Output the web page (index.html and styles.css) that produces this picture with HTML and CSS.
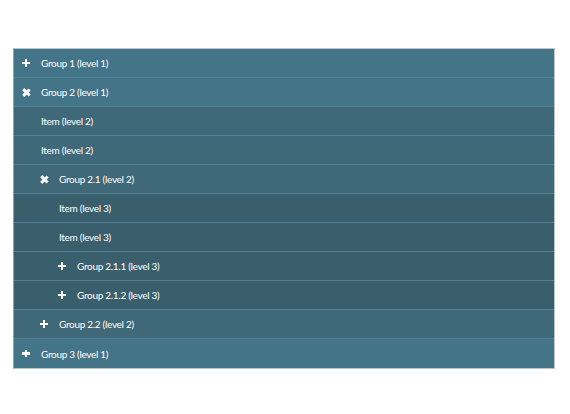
FILE: index.html
```html
<!DOCTYPE html>
<html>
<head>
<meta charset="utf-8">
<link rel="stylesheet" href="styles.css">
</head>
<body>
<ul class="tree">
  <li class="row l1 group"><span class="ico plus"></span><span class="label">Group 1 (level 1)</span></li>
  <li class="row l1 group"><span class="ico cross"></span><span class="label">Group 2 (level 1)</span></li>
  <li class="row l2 item"><span class="label">Item (level 2)</span></li>
  <li class="row l2 item"><span class="label">Item (level 2)</span></li>
  <li class="row l2 group"><span class="ico cross"></span><span class="label">Group 2.1 (level 2)</span></li>
  <li class="row l3 item"><span class="label">Item (level 3)</span></li>
  <li class="row l3 item"><span class="label">Item (level 3)</span></li>
  <li class="row l3 group"><span class="ico plus"></span><span class="label">Group 2.1.1 (level 3)</span></li>
  <li class="row l3 group"><span class="ico plus"></span><span class="label">Group 2.1.2 (level 3)</span></li>
  <li class="row l2 group"><span class="ico plus"></span><span class="label">Group 2.2 (level 2)</span></li>
  <li class="row l1 group"><span class="ico plus"></span><span class="label">Group 3 (level 1)</span></li>
</ul>
</body>
</html>
```
FILE: styles.css
```css
html, body { margin: 0; padding: 0; background: #fff; }
body { padding: 48px 15px 0 13px; font-family: Lato, "Open Sans", sans-serif; }
.tree {
  list-style: none; margin: 0; padding: 0;
  border: 1px solid #b9c6cb;
  border-left-color: #8aa3ad;
  display: flex; flex-direction: column;
}
.row {
  height: 28px;
  border-top: 1px solid #4f8296;
  display: flex; align-items: center;
  color: #fff; font-size: 10px; letter-spacing: -0.3px;
}
.row:first-child { border-top: none; }
.row:last-child { height: 29px; }
.l1 { background: #447487; }
.l2 { background: #3f6878; }
.l3 { background: #395f6c; }
.group.l1 { padding-left: 6px; }
.group.l2 { padding-left: 24px; }
.group.l3 { padding-left: 42px; }
.item.l2 { padding-left: 27px; }
.item.l3 { padding-left: 45px; }
.ico { width: 12px; height: 10px; margin-right: 9px; position: relative; flex: none; }
.plus::before, .plus::after, .cross::before, .cross::after {
  content: ""; position: absolute; background: #fff;
}
.plus::before { left: 4.75px; top: 1.25px; width: 2.5px; height: 7.5px; }
.plus::after { left: 2.25px; top: 3.75px; width: 7.5px; height: 2.5px; }
.cross::before, .cross::after { left: 4.75px; top: 0.5px; width: 2.5px; height: 9px; }
.cross::before { transform: rotate(45deg); }
.cross::after { transform: rotate(-45deg); }
.label { white-space: nowrap; }
```
